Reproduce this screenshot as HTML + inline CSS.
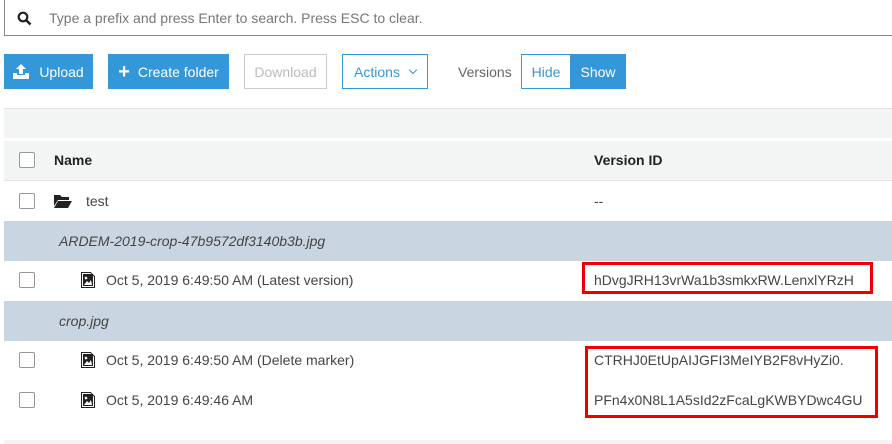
<!DOCTYPE html><html><head><style>
body{margin:0;width:892px;height:444px;overflow:hidden;background:#fff;font-family:"Liberation Sans",sans-serif;font-size:14px;color:#333;position:relative}
.a{position:absolute}
.btn{position:absolute;top:54px;height:35px;box-sizing:border-box;display:flex;align-items:center;justify-content:center;font-size:14px}
.blue{background:#3498d8;color:#fff}
.cb{position:absolute;left:19px;width:16px;height:16px;box-sizing:border-box;border:1px solid #999;border-radius:2px;background:#fff}
.row{position:absolute;left:4px;width:888px;height:40px}
.grp{background:#c9d6e2}
.t{position:absolute;line-height:16px;color:#444}
.red{position:absolute;border:3px solid #e00;box-sizing:border-box}
</style></head><body>
<div class="a" style="left:4px;top:-2px;width:900px;height:38px;border:1px solid #888;box-sizing:border-box"></div>
<svg class="a" style="left:17px;top:11px" width="15" height="15" viewBox="0 0 15 15"><circle cx="6" cy="6" r="4.3" fill="none" stroke="#222" stroke-width="2.2"/><path d="M9 9l4.5 4.5" stroke="#222" stroke-width="2.6"/></svg>
<div class="t" style="left:49px;top:10px;color:#777">Type a prefix and press Enter to search. Press ESC to clear.</div>
<div class="btn blue" style="left:4px;width:89px"><svg width="16" height="15" viewBox="0 0 16 15" style="margin-right:10px"><path d="M8 0l5 5h-3v5H6V5H3z" fill="#fff"/><path d="M0 9h4v2h8V9h4v6H0z" fill="#fff"/></svg>Upload</div>
<div class="btn blue" style="left:108px;width:121px"><span style="font-size:20px;font-weight:bold;margin-right:8px;line-height:14px">+</span>Create folder</div>
<div class="btn" style="left:244px;width:83px;border:1px solid #ccc;color:#bbb">Download</div>
<div class="btn" style="left:342px;width:86px;border:1px solid #3498d8;color:#3498d8">Actions <span style="margin-left:10px;display:inline-block;width:5px;height:5px;border-right:1.3px solid #3498d8;border-bottom:1.3px solid #3498d8;transform:rotate(45deg);margin-top:-4px"></span></div>
<div class="t" style="left:458px;top:64px;color:#666">Versions</div>
<div class="btn" style="left:521px;width:50px;border:1px solid #3498d8;color:#3498d8">Hide</div>
<div class="btn blue" style="left:570px;width:56px">Show</div>
<div class="a" style="left:4px;top:108px;width:888px;height:29px;background:#f3f4f4;border-top:1px solid #e4e4e4"></div>
<div class="row" style="top:141px;background:#f3f4f4;border-bottom:1px solid #e4e4e4;height:39px"></div>
<div class="cb" style="top:152px"></div>
<div class="t" style="left:54px;top:152px;font-weight:bold;color:#222">Name</div>
<div class="t" style="left:594px;top:152px;font-weight:bold;color:#222">Version ID</div>
<div class="cb" style="top:193px"></div>
<svg class="a" style="left:54px;top:194px" width="18" height="14" viewBox="0 0 18 14"><path d="M0 1h6l2 2h7v3H4L0 12z" fill="#222"/><path d="M4 7h14l-4 7H0z" fill="#222"/></svg>
<div class="t" style="left:86px;top:193px">test</div>
<div class="t" style="left:594px;top:193px">--</div>
<div class="row grp" style="top:221px"></div>
<div class="t" style="left:59px;top:233px;font-style:italic">ARDEM-2019-crop-47b9572df3140b3b.jpg</div>
<div class="cb" style="top:272px"></div>
<svg class="a" style="left:81px;top:272px" width="14" height="16" viewBox="0 0 14 16"><path d="M0.5 0.5h9l4 4v11H0.5z" fill="#fff" stroke="#222"/><rect x="2" y="2" width="10" height="12" fill="#222"/><circle cx="5" cy="6" r="1.3" fill="#fff"/><path d="M3 13l3-4 2 2 2-3 1 5z" fill="#fff"/></svg>
<div class="t" style="left:106px;top:272px">Oct 5, 2019 6:49:50 AM (Latest version)</div>
<div class="t" style="left:594px;top:272px">hDvgJRH13vrWa1b3smkxRW.LenxlYRzH</div>
<div class="red" style="left:582px;top:262px;width:291px;height:32px"></div>
<div class="row grp" style="top:301px"></div>
<div class="t" style="left:59px;top:313px;font-style:italic">crop.jpg</div>
<div class="cb" style="top:352px"></div>
<svg class="a" style="left:81px;top:352px" width="14" height="16" viewBox="0 0 14 16"><path d="M0.5 0.5h9l4 4v11H0.5z" fill="#fff" stroke="#222"/><rect x="2" y="2" width="10" height="12" fill="#222"/><circle cx="5" cy="6" r="1.3" fill="#fff"/><path d="M3 13l3-4 2 2 2-3 1 5z" fill="#fff"/></svg>
<div class="t" style="left:106px;top:352px">Oct 5, 2019 6:49:50 AM (Delete marker)</div>
<div class="t" style="left:594px;top:352px">CTRHJ0EtUpAIJGFI3MeIYB2F8vHyZi0.</div>
<div class="cb" style="top:392px"></div>
<svg class="a" style="left:81px;top:392px" width="14" height="16" viewBox="0 0 14 16"><path d="M0.5 0.5h9l4 4v11H0.5z" fill="#fff" stroke="#222"/><rect x="2" y="2" width="10" height="12" fill="#222"/><circle cx="5" cy="6" r="1.3" fill="#fff"/><path d="M3 13l3-4 2 2 2-3 1 5z" fill="#fff"/></svg>
<div class="t" style="left:106px;top:392px">Oct 5, 2019 6:49:46 AM</div>
<div class="t" style="left:594px;top:392px">PFn4x0N8L1A5sId2zFcaLgKWBYDwc4GU</div>
<div class="red" style="left:585px;top:346px;width:293px;height:72px"></div>
<div class="a" style="left:4px;top:440px;width:888px;height:4px;background:#f3f4f4"></div>
</body></html>
